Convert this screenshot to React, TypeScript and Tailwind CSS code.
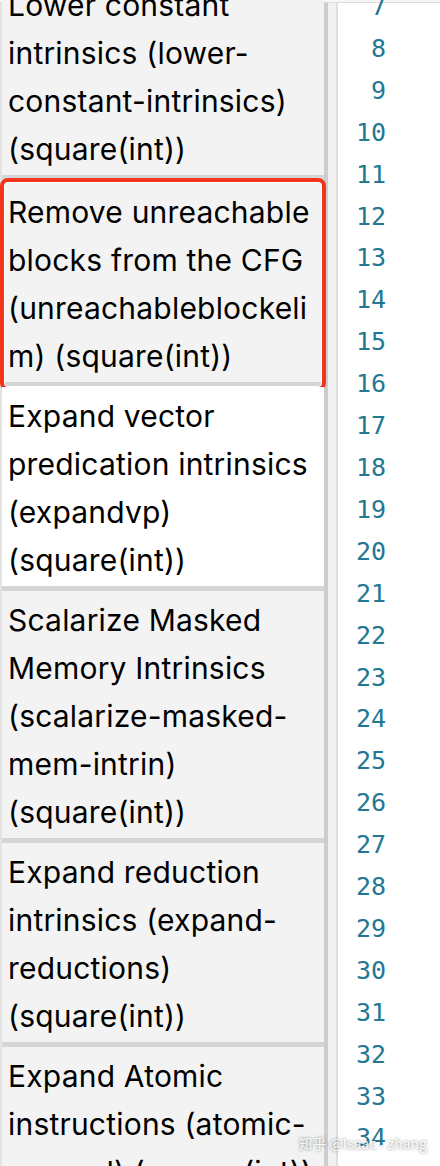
import React from 'react'

type Pass = { lines: string[]; white?: boolean; selected?: boolean }

const passes: Pass[] = [
  { lines: ['Lower constant', 'intrinsics (lower-', 'constant-intrinsics)', '(square(int))'] },
  {
    lines: ['Remove unreachable', 'blocks from the CFG', '(unreachableblockeli', 'm) (square(int))'],
    selected: true,
  },
  { lines: ['Expand vector', 'predication intrinsics', '(expandvp)', '(square(int))'], white: true },
  {
    lines: ['Scalarize Masked', 'Memory Intrinsics', '(scalarize-masked-', 'mem-intrin)', '(square(int))'],
  },
  { lines: ['Expand reduction', 'intrinsics (expand-', 'reductions)', '(square(int))'] },
  { lines: ['Expand Atomic', 'instructions (atomic-', 'expand) (square(int))'] },
]

const lineNumbers = Array.from({ length: 29 }, (_, i) => i + 7)

function PassItem({ pass }: { pass: Pass }) {
  return (
    <div
      className={`relative pl-[6px] leading-[48px] ${pass.white ? 'bg-white' : 'bg-[#f3f3f3]'} ${
        pass.selected ? 'pt-[8px] pb-[2px]' : 'pt-[5px] pb-[2px]'
      }`}
    >
      {pass.lines.map(line => (
        <div key={line} className="whitespace-nowrap">
          {line}
        </div>
      ))}
      {pass.selected && (
        <div className="absolute -top-[2px] -bottom-[9px] -left-[2px] -right-[2px] rounded-[8px] border-4 border-[#f2341b] shadow-[inset_0_0_0_1px_#ffffff]" />
      )}
    </div>
  )
}

export default function App() {
  return (
    <div className="relative w-[440px] h-[1166px] overflow-hidden bg-white">
      <div className="h-[3px] bg-[#f6f6f6] border-b border-[#dddddd]" />
      <div className="flex h-full">
        {/* pass list */}
        <div className="w-[324px] shrink-0 border-l-2 border-[#e3e3e3] bg-[#d5d5d5]">
          <div
            className="-mt-[27px] flex flex-col gap-[5px] text-[30px] tracking-[0.2px] text-black"
            style={{ fontFamily: 'Inter, "Liberation Sans", sans-serif' }}
          >
            {passes.map(p => (
              <PassItem key={p.lines[0]} pass={p} />
            ))}
          </div>
        </div>

        {/* splitter */}
        <div className="w-[4px] shrink-0 bg-[#cdcdcd]" />
        <div className="w-[10px] shrink-0 bg-[#f1f1f1] border-r-2 border-[#dedede]" />

        {/* editor gutter */}
        <div className="flex-1 bg-white">
          <div
            className="-mt-[17px] w-[48px] text-right text-[25px] leading-[41.9px] text-[#237893]"
            style={{ fontFamily: '"DejaVu Sans Mono", monospace' }}
          >
            {lineNumbers.map(n => (
              <div key={n}>{n}</div>
            ))}
          </div>
        </div>
      </div>

      <div
        className="absolute right-[13px] bottom-[12px] text-[14px] text-white/90 [text-shadow:0_0_3px_rgba(0,0,0,0.5)]"
        style={{ fontFamily: '"Noto Sans CJK SC", "Liberation Sans", sans-serif' }}
      >
        知乎 @Isaac - zhang
      </div>
    </div>
  )
}
